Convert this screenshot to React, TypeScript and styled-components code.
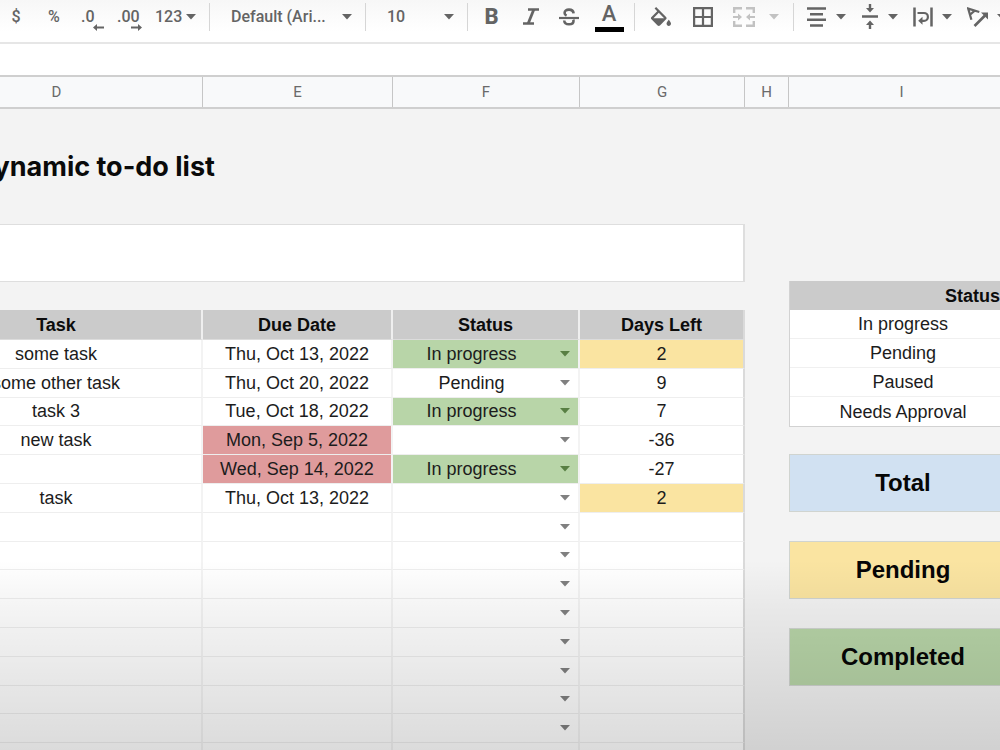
import React from "react";
import styled, { createGlobalStyle } from "styled-components";

const GlobalStyle = createGlobalStyle`
  *, *::before, *::after { box-sizing: border-box; }
  body { margin: 0; background: #f3f3f3; }
  button, select { font: inherit; color: inherit; border: 0; background: none; padding: 0; margin: 0; }
`;

const sheetColumns = "292px 190px 187px 165px 44px 226px minmax(140px, 1fr)";

const Page = styled.div`
  position: relative;
  display: flex;
  flex-direction: column;
  height: 100vh;
  overflow: hidden;
  background: #f3f3f3;
  color: #1c1c1c;
  font-family: "Liberation Sans", Arial, sans-serif;
`;

/* ---------- toolbar ---------- */

const Toolbar = styled.header`
  display: flex;
  flex: none;
  align-items: center;
  height: 44px;
  padding-bottom: 9px;
  overflow: hidden;
  border-bottom: 2px solid #e6e6e6;
  background: linear-gradient(#f7f7f7, #ffffff 32px);
  color: #646464;
  font-family: Roboto, sans-serif;
  font-size: 16px;
  font-weight: 500;
  line-height: 20px;
`;

const ToolButton = styled.button<{ $width: number }>`
  display: flex;
  flex: none;
  align-items: center;
  justify-content: center;
  width: ${(p) => p.$width}px;
  height: 32px;
`;

const FormatButton = styled(ToolButton)`
  justify-content: flex-start;
  gap: 4px;
  padding-left: 5px;
`;

const DecimalButton = styled(ToolButton)`
  position: relative;
  justify-content: flex-start;
  padding-left: 5px;

  svg {
    position: absolute;
    right: 8px;
    bottom: 2px;
  }
`;

const MenuButton = styled.button<{ $roomy?: boolean; $muted?: boolean }>`
  display: flex;
  flex: none;
  align-items: center;
  gap: ${(p) => (p.$roomy ? 14 : 9)}px;
  height: 32px;
  padding: 0 ${(p) => (p.$roomy ? 10 : 6)}px 0 9px;
  color: ${(p) => (p.$muted ? "#c2c2c2" : "inherit")};
`;

const Divider = styled.span`
  flex: none;
  width: 1px;
  height: 28px;
  margin: 0 4px;
  background: #d6d6d6;
`;

const ToolSelect = styled.label<{ $width: number }>`
  display: grid;
  flex: none;
  align-items: center;
  width: ${(p) => p.$width}px;
  height: 32px;

  select, svg { grid-area: 1 / 1; }
  select {
    appearance: none;
    width: 100%;
    height: 32px;
    padding-left: 17px;
  }
  svg {
    justify-self: end;
    margin-right: 9px;
    pointer-events: none;
  }
`;

const Letter = styled.span<{ $weight: number }>`
  font-size: 22px;
  font-weight: ${(p) => p.$weight};
  line-height: 24px;
`;

const ColorLetter = styled.span`
  display: flex;
  align-items: center;
  flex-direction: column;
  width: 29px;
  border-bottom: 5px solid #000;
  font-size: 22px;
  line-height: 26px;
`;

/* ---------- sheet ---------- */

const FormulaBar = styled.div`
  flex: none;
  height: 31px;
  background: #fff;
`;

const Sheet = styled.main`
  flex: 1;
  min-height: 0;
  margin-left: -89px;
  overflow: hidden;
`;

const ColumnHeads = styled.div`
  display: grid;
  grid-template-columns: ${sheetColumns};
  height: 34px;
  border-top: 2px solid #cfcfcf;
  border-bottom: 2px solid #cfcfcf;
  background: #f8f9fa;
`;

const ColumnHead = styled.div`
  display: flex;
  align-items: center;
  justify-content: center;
  border-right: 1px solid #c6c6c6;
  color: #6a6a6a;
  font-family: Roboto, sans-serif;
  font-size: 15px;
  line-height: 20px;
`;

const Cells = styled.div`
  display: grid;
  grid-template-columns: 834px minmax(366px, 1fr);
  column-gap: 44px;
`;

const Title = styled.h1`
  display: flex;
  align-items: center;
  height: 115px;
  margin: 0;
  padding-left: 63px;
  color: #0a0a0a;
  font-family: Inter, sans-serif;
  font-size: 27px;
  font-weight: 700;
  white-space: nowrap;
`;

const MergedCell = styled.div`
  height: 58px;
  margin-bottom: 28px;
  border: 1px solid #dedede;
  border-width: 1px 2px 1px 1px;
  background: #fff;
`;

const TaskTable = styled.table`
  width: 100%;
  height: 462px;
  table-layout: fixed;
  border-collapse: separate;
  border-spacing: 0;
  background: #fff;
  font-size: 18px;
  line-height: 20px;
  text-align: center;
`;

const HeadCell = styled.th`
  padding: 5px 0 4px;
  border-right: 2px solid #efefef;
  border-bottom: 1px solid #dcdcdc;
  background: #cbcbcb;
  color: #0c0c0c;
  font-weight: 700;

  &:last-child { border-right-color: #dadada; }
`;

const tones = {
  none: "transparent",
  green: "#b8d5a8",
  red: "#df9b9c",
  yellow: "#fae4a1",
  blue: "#d1e1f2",
};
type Tone = keyof typeof tones;

const Cell = styled.td<{ $tone?: Tone }>`
  padding: 0;
  border-right: 2px solid #f3f3f3;
  border-bottom: 1px solid #eeeeee;
  background: ${(p) => tones[p.$tone ?? "none"]};

  &:last-child { border-right-color: #dadada; }
`;

const StatusSelect = styled.label<{ $tone: Tone }>`
  display: grid;
  align-items: center;
  color: ${(p) => (p.$tone === "green" ? "#587f43" : "#808080")};

  select, svg { grid-area: 1 / 1; }
  select {
    appearance: none;
    width: 100%;
    height: 27px;
    padding-right: 28px;
    color: #1c1c1c;
    text-align: center;
  }
  svg {
    justify-self: end;
    margin-right: 8px;
    pointer-events: none;
  }
`;

const Side = styled.aside`
  display: flex;
  flex-direction: column;
  gap: 29px;
  padding-top: 172px;
`;

const StatusTable = styled.table`
  width: 100%;
  table-layout: fixed;
  margin-bottom: -2px;
  border-collapse: separate;
  border-spacing: 0;
  border-left: 1px solid #d2d2d2;
  border-bottom: 1px solid #d2d2d2;
  background: #fff;
  font-size: 18px;
  line-height: 20px;
  text-align: center;

  th { height: 29px; padding: 0; background: #cbcbcb; color: #0c0c0c; }
  td { height: 29px; padding: 0; border-bottom: 1px solid #f0f0f0; }
  tr:last-child td { border-bottom: 0; }
`;

const Summary = styled.section<{ $tone: Tone }>`
  display: grid;
  grid-template-columns: 226px 1fr;
  align-items: center;
  height: 58px;
  border: 1px solid #d0d4d0;
  background: ${(p) => tones[p.$tone]};
`;

const SummaryLabel = styled.h2`
  margin: 0;
  color: #060606;
  font-size: 24px;
  font-weight: 700;
  line-height: 28px;
  text-align: center;
`;

const Shade = styled.div`
  position: absolute;
  inset: auto 0 0 0;
  height: 190px;
  background: linear-gradient(rgba(0, 0, 0, 0), rgba(0, 0, 0, 0.045) 25%, rgba(0, 0, 0, 0.14));
  pointer-events: none;
`;

/* ---------- icons ---------- */

const Caret = () => (
  <svg width="10" height="6" viewBox="0 0 10 6" fill="currentColor" aria-hidden="true">
    <path d="M0 0h10L5 5.6z" />
  </svg>
);

const SmallArrow = ({ right }: { right?: boolean }) => (
  <svg width="11" height="7" viewBox="0 0 11 7" fill="currentColor" aria-hidden="true">
    <path d={right ? "M0 2.4h7V0l4 3.5L7 7V4.6H0z" : "M11 2.4H4V0L0 3.5 4 7V4.6h7z"} />
  </svg>
);

const ItalicIcon = () => (
  <svg width="16" height="17" viewBox="0 0 16 17" fill="none" stroke="currentColor" aria-hidden="true">
    <path d="M5 1.5h11M0 15.5h11" strokeWidth="2.4" />
    <path d="M10.8 1.5l-5.6 14" strokeWidth="2.8" />
  </svg>
);

const StrikeIcon = () => (
  <svg width="20" height="18" viewBox="0 0 20 18" fill="none" stroke="currentColor" aria-hidden="true">
    <path d="M0 10h20" strokeWidth="2.2" />
    <path d="M14.6 5.4C14.4 3.1 12.600 1.600 10 1.600 7.300 1.600 5.600 2.900 5.600 4.900c0 1.300.7 2.100 2 2.800M5.200 12.500c.2 2.400 2.100 3.800 4.800 3.800 2.700 0 4.500-1.300 4.500-3.300 0-.5-.1-1-.3-1.400" strokeWidth="2.600" />
  </svg>
);

const FillIcon = () => (
  <svg width="20" height="19" viewBox="3 0 18 17" fill="currentColor" aria-hidden="true">
    <path d="M16.56 8.94L7.62 0 6.21 1.41l2.38 2.38-5.15 5.15a1.49 1.49 0 0 0 0 2.12l5.5 5.5c.29.29.68.44 1.06.44s.77-.15 1.06-.44l5.500-5.500c.59-.58.59-1.530 0-2.120zM5.210 10L10 5.210 14.790 10H5.210zM19 11.500s-2 2.170-2 3.500c0 1.100.9 2 2 2s2-.9 2-2c0-1.330-2-3.500-2-3.500z" />
  </svg>
);

const BordersIcon = () => (
  <svg width="20" height="20" viewBox="3 3 18 18" fill="currentColor" aria-hidden="true">
    <path d="M3 3v18h18V3H3zm8 16H5v-6h6v6zm0-8H5V5h6v6zm8 8h-6v-6h6v6zm0-8h-6V5h6v6z" />
  </svg>
);

const MergeIcon = () => (
  <svg width="22" height="20" viewBox="0 0 22 20" fill="none" stroke="currentColor" strokeWidth="2.4" aria-hidden="true">
    <path d="M1.200 6V1.200H9M13 1.200h7.800V6M1.200 14v4.800H9M13 18.800h7.800V14" />
    <path d="M0 10h6M22 10h-6" strokeWidth="2" />
    <path d="M5 6.500L9 10l-4 3.500zM17 6.500L13 10l4 3.500z" fill="currentColor" stroke="none" />
  </svg>
);

const AlignIcon = () => (
  <svg width="20" height="20" viewBox="0 0 20 20" fill="none" stroke="currentColor" strokeWidth="2.400" aria-hidden="true">
    <path d="M0 1.500h19M3 7.200h13M0 12.800h19M3 18.500h13" />
  </svg>
);

const VerticalAlignIcon = () => (
  <svg width="18" height="25" viewBox="0 0 18 25" fill="none" stroke="currentColor" strokeWidth="2.400" aria-hidden="true">
    <path d="M1 12.500h16M9 0v5M9 25v-5" />
    <path d="M5 4h8L9 8.500zM5 21h8l-4-4.500z" fill="currentColor" stroke="none" />
  </svg>
);

const WrapIcon = () => (
  <svg width="20" height="20" viewBox="0 0 20 20" fill="none" stroke="currentColor" strokeWidth="2.200" aria-hidden="true">
    <path d="M1.500 0.500v19M18.500 0.500v19" strokeWidth="2.500" />
    <path d="M4.500 6H11a3.900 3.900 0 0 1 0 7.800H8.500" />
    <path d="M9.500 9.800v8L5.200 13.800z" fill="currentColor" stroke="none" />
  </svg>
);

const RotateIcon = () => (
  <svg width="21" height="20" viewBox="0 0 21 20" fill="none" stroke="currentColor" strokeWidth="2.200" aria-hidden="true">
    <path d="M4.400 12.800L1.200 1.600 12.300 5M3 7.800L7.700 3.600" />
    <path d="M7.500 19L18 8.500" strokeWidth="2.600" />
    <path d="M14 5.500h7v7z" fill="currentColor" stroke="none" />
  </svg>
);

/* ---------- data ---------- */

interface Task {
  name: string;
  due: string;
  status: string;
  daysLeft: string;
}

const statuses = ["In progress", "Pending", "Paused", "Needs Approval"];

const tasks: Task[] = [
  { name: "some task", due: "Thu, Oct 13, 2022", status: "In progress", daysLeft: "2" },
  { name: "some other task", due: "Thu, Oct 20, 2022", status: "Pending", daysLeft: "9" },
  { name: "task 3", due: "Tue, Oct 18, 2022", status: "In progress", daysLeft: "7" },
  { name: "new task", due: "Mon, Sep 5, 2022", status: "", daysLeft: "-36" },
  { name: "", due: "Wed, Sep 14, 2022", status: "In progress", daysLeft: "-27" },
  { name: "task", due: "Thu, Oct 13, 2022", status: "", daysLeft: "2" },
  ...Array.from({ length: 9 }, () => ({ name: "", due: "", status: "", daysLeft: "" })),
];

const summaries: { label: string; tone: Tone }[] = [
  { label: "Total", tone: "blue" },
  { label: "Pending", tone: "yellow" },
  { label: "Completed", tone: "green" },
];

function TaskRow({ task, index }: { task: Task; index: number }) {
  const statusTone: Tone = task.status === "In progress" ? "green" : "none";
  return (
    <tr>
      <Cell>{task.name}</Cell>
      <Cell $tone={Number(task.daysLeft) < 0 ? "red" : "none"}>{task.due}</Cell>
      <Cell $tone={statusTone}>
        <StatusSelect $tone={statusTone}>
          <select defaultValue={task.status} aria-label={`Status, row ${index + 1}`}>
            <option value="" />
            {statuses.map((s) => (
              <option key={s}>{s}</option>
            ))}
          </select>
          <Caret />
        </StatusSelect>
      </Cell>
      <Cell $tone={task.daysLeft === "2" ? "yellow" : "none"}>{task.daysLeft}</Cell>
    </tr>
  );
}

export default function App() {
  return (
    <Page>
      <GlobalStyle />
      <Toolbar>
        <ToolButton $width={32} aria-label="Format as currency">$</ToolButton>
        <ToolButton $width={44} aria-label="Format as percent">%</ToolButton>
        <DecimalButton $width={36} aria-label="Decrease decimal places">.0<SmallArrow /></DecimalButton>
        <DecimalButton $width={38} aria-label="Increase decimal places">.00<SmallArrow right /></DecimalButton>
        <FormatButton $width={55} aria-label="More formats">123<Caret /></FormatButton>
        <Divider />
        <ToolSelect $width={147}>
          <select aria-label="Font"><option>Default (Ari...</option></select>
          <Caret />
        </ToolSelect>
        <Divider />
        <ToolSelect $width={93}>
          <select aria-label="Font size"><option>10</option></select>
          <Caret />
        </ToolSelect>
        <Divider />
        <ToolButton $width={39} aria-label="Bold"><Letter $weight={800}>B</Letter></ToolButton>
        <ToolButton $width={39} aria-label="Italic"><ItalicIcon /></ToolButton>
        <ToolButton $width={38} aria-label="Strikethrough"><StrikeIcon /></ToolButton>
        <ToolButton $width={42} aria-label="Text color"><ColorLetter>A</ColorLetter></ToolButton>
        <Divider />
        <ToolButton $width={43} aria-label="Fill color"><FillIcon /></ToolButton>
        <ToolButton $width={42} aria-label="Borders"><BordersIcon /></ToolButton>
        <MenuButton $roomy $muted aria-label="Merge cells"><MergeIcon /><Caret /></MenuButton>
        <Divider />
        <MenuButton aria-label="Horizontal align"><AlignIcon /><Caret /></MenuButton>
        <MenuButton aria-label="Vertical align"><VerticalAlignIcon /><Caret /></MenuButton>
        <MenuButton aria-label="Text wrapping"><WrapIcon /><Caret /></MenuButton>
        <MenuButton aria-label="Text rotation"><RotateIcon /><Caret /></MenuButton>
      </Toolbar>
      <FormulaBar />
      <Sheet>
        <ColumnHeads>
          {["D", "E", "F", "G", "H", "I"].map((c) => (
            <ColumnHead key={c}>{c}</ColumnHead>
          ))}
        </ColumnHeads>
        <Cells>
          <div>
            <Title>Dynamic to-do list</Title>
            <MergedCell />
            <TaskTable>
              <colgroup>
                <col width="292" />
                <col width="190" />
                <col width="187" />
                <col width="165" />
              </colgroup>
              <thead>
                <tr>
                  <HeadCell>Task</HeadCell>
                  <HeadCell>Due Date</HeadCell>
                  <HeadCell>Status</HeadCell>
                  <HeadCell>Days Left</HeadCell>
                </tr>
              </thead>
              <tbody>
                {tasks.map((task, i) => (
                  <TaskRow key={i} task={task} index={i} />
                ))}
              </tbody>
            </TaskTable>
          </div>
          <Side>
            <StatusTable>
              <colgroup>
                <col width="226" />
                <col />
              </colgroup>
              <thead>
                <tr><th colSpan={2}>Status</th></tr>
              </thead>
              <tbody>
                {statuses.map((s) => (
                  <tr key={s}><td>{s}</td><td /></tr>
                ))}
              </tbody>
            </StatusTable>
            {summaries.map((s) => (
              <Summary key={s.label} $tone={s.tone}>
                <SummaryLabel>{s.label}</SummaryLabel>
              </Summary>
            ))}
          </Side>
        </Cells>
      </Sheet>
      <Shade />
    </Page>
  );
}
